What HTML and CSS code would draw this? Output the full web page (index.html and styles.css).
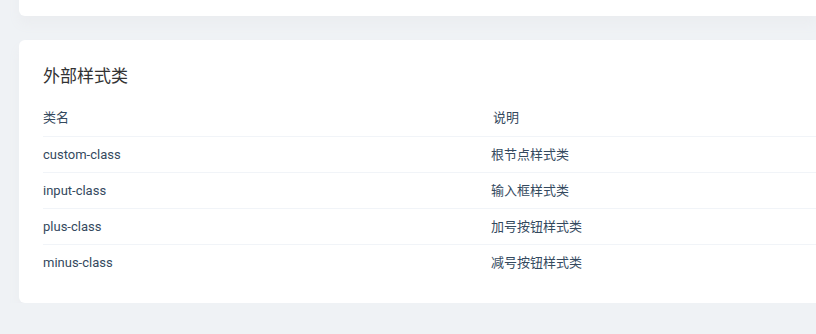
FILE: index.html
```html
<!DOCTYPE html>
<html lang="zh-CN">
<head>
  <meta charset="UTF-8">
  <title>Stepper 步进器</title>
  <link rel="stylesheet" href="styles.css">
</head>
<body>

  <div class="doc-content">

    <!-- previous section, scrolled mostly out of view -->
    <section class="doc-card doc-card-prev"></section>

    <section class="doc-card">
      <h3>外部样式类</h3>
      <table>
        <thead>
          <tr>
            <th class="col-name">类名</th>
            <th>说明</th>
          </tr>
        </thead>
        <tbody>
          <tr>
            <td>custom-class</td>
            <td>根节点样式类</td>
          </tr>
          <tr>
            <td>input-class</td>
            <td>输入框样式类</td>
          </tr>
          <tr>
            <td>plus-class</td>
            <td>加号按钮样式类</td>
          </tr>
          <tr>
            <td>minus-class</td>
            <td>减号按钮样式类</td>
          </tr>
        </tbody>
      </table>
    </section>

  </div>

</body>
</html>
```

FILE: styles.css
```css
html, body {
  overflow: hidden;
}

body {
  margin: 0;
  padding: 0;
  background: #eff2f5;
  color: #34495e;
  font-family: Roboto, "Noto Sans CJK SC", sans-serif;
  -webkit-font-smoothing: antialiased;
}

.doc-content {
  display: flex;
  flex-direction: column;
  gap: 24px;
  padding-left: 19px;
}

.doc-card {
  box-sizing: border-box;
  padding: 24px 0 23px 24px;
  background: #fff;
  border-radius: 6px 0 0 6px;
  box-shadow: 0 8px 12px #ebedf0;
}

.doc-card-prev {
  height: 116px;
  margin-top: -100px;
}

.doc-card h3 {
  margin: 0 0 12px;
  font-size: 17px;
  font-weight: normal;
  line-height: 24px;
  color: #323233;
}

table {
  width: 100%;
  border-collapse: collapse;
  font-size: 13px;
  line-height: 20px;
}

th {
  padding: 8px 10px;
  font-weight: normal;
  text-align: left;
}

td {
  padding: 8px 8px 7px;
  border-top: 1px solid #f1f4f8;
}

th:first-child,
td:first-child {
  padding-left: 0;
}

.col-name {
  width: 430px;
}
```
